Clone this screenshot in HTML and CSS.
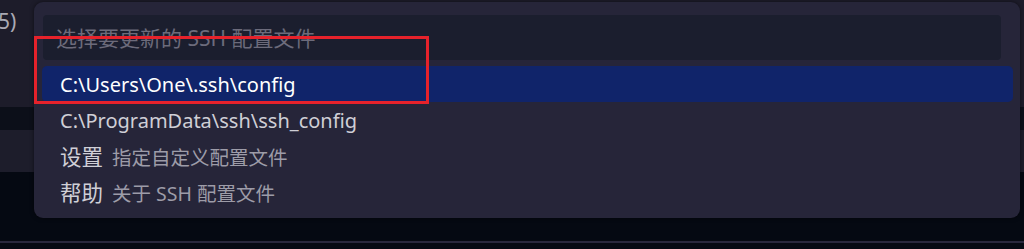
FILE: index.html
```html
<!DOCTYPE html>
<html lang="zh-CN">
<head>
<meta charset="utf-8">
<link rel="stylesheet" href="styles.css">
</head>
<body>
<div class="stage">
  <div class="bg">
    <div class="band band-a"><span class="clip-text">5)</span></div>
    <div class="band band-b"></div>
    <div class="band band-c"></div>
    <div class="band band-d"></div>
    <div class="band band-line"></div>
    <div class="band band-e"></div>
  </div>

  <div class="quick-pick">
    <div class="qp-input">选择要更新的 SSH 配置文件</div>
    <ul class="qp-list">
      <li class="qp-row selected"><span class="qp-label">C:\Users\One\.ssh\config</span></li>
      <li class="qp-row"><span class="qp-label">C:\ProgramData\ssh\ssh_config</span></li>
      <li class="qp-row"><span class="qp-label cjk">设置</span><span class="qp-desc">指定自定义配置文件</span></li>
      <li class="qp-row"><span class="qp-label cjk">帮助</span><span class="qp-desc">关于 SSH 配置文件</span></li>
    </ul>
  </div>

  <div class="annotation"></div>
</div>
</body>
</html>
```

FILE: styles.css
```css
html, body {
  margin: 0;
  padding: 0;
  background: #060a14;
}

.stage {
  position: relative;
  width: 1024px;
  height: 249px;
  overflow: hidden;
  font-family: "Noto Sans", "Noto Sans CJK SC", sans-serif;
}

.bg {
  display: flex;
  flex-direction: column;
  height: 100%;
}

.band { flex: none; }
.band-a { height: 107px; background: #1d1c2a; }
.band-b { height: 23px; background: #0c0f19; }
.band-c { height: 42px; background: #1d1d2b; }
.band-d { height: 69px; background: #050912; }
.band-line { height: 2px; background: #29283e; }
.band-e { flex: 1; background: #060a14; }

.clip-text {
  display: block;
  margin-left: -2px;
  padding-top: 6px;
  font-size: 21px;
  line-height: 30px;
  color: #a9a9b3;
}

.quick-pick {
  position: absolute;
  left: 34px;
  top: 2px;
  width: 986px;
  height: 216px;
  box-sizing: border-box;
  padding: 13px 7px 8px 9px;
  background: #262539;
  border-radius: 9px;
  box-shadow: 0 0 4px rgba(0, 0, 0, 0.5);
}

.qp-input {
  width: 958px;
  height: 45px;
  box-sizing: border-box;
  padding-left: 13px;
  background: #1b1e2e;
  border-radius: 4px;
  font-size: 21px;
  line-height: 47px;
  color: #6c6b7b;
  white-space: nowrap;
}

.qp-list {
  list-style: none;
  margin: 6px 0 0 -1px;
  padding: 0;
}

.qp-row {
  display: flex;
  align-items: baseline;
  height: 36px;
  padding-left: 18px;
  border-radius: 5px;
  line-height: 38px;
  white-space: nowrap;
}

.qp-row.selected {
  background: #10246a;
}

.qp-label {
  font-size: 20px;
  color: #cfcfd6;
}

.qp-label.cjk {
  font-size: 21.5px;
}

.qp-row.selected .qp-label {
  color: #ffffff;
}

.qp-desc {
  margin-left: 9px;
  font-size: 19.5px;
  color: #9d9ca8;
}

.annotation {
  position: absolute;
  left: 34px;
  top: 36px;
  width: 395px;
  height: 68px;
  box-sizing: border-box;
  border: 3px solid #e6222b;
}
```
